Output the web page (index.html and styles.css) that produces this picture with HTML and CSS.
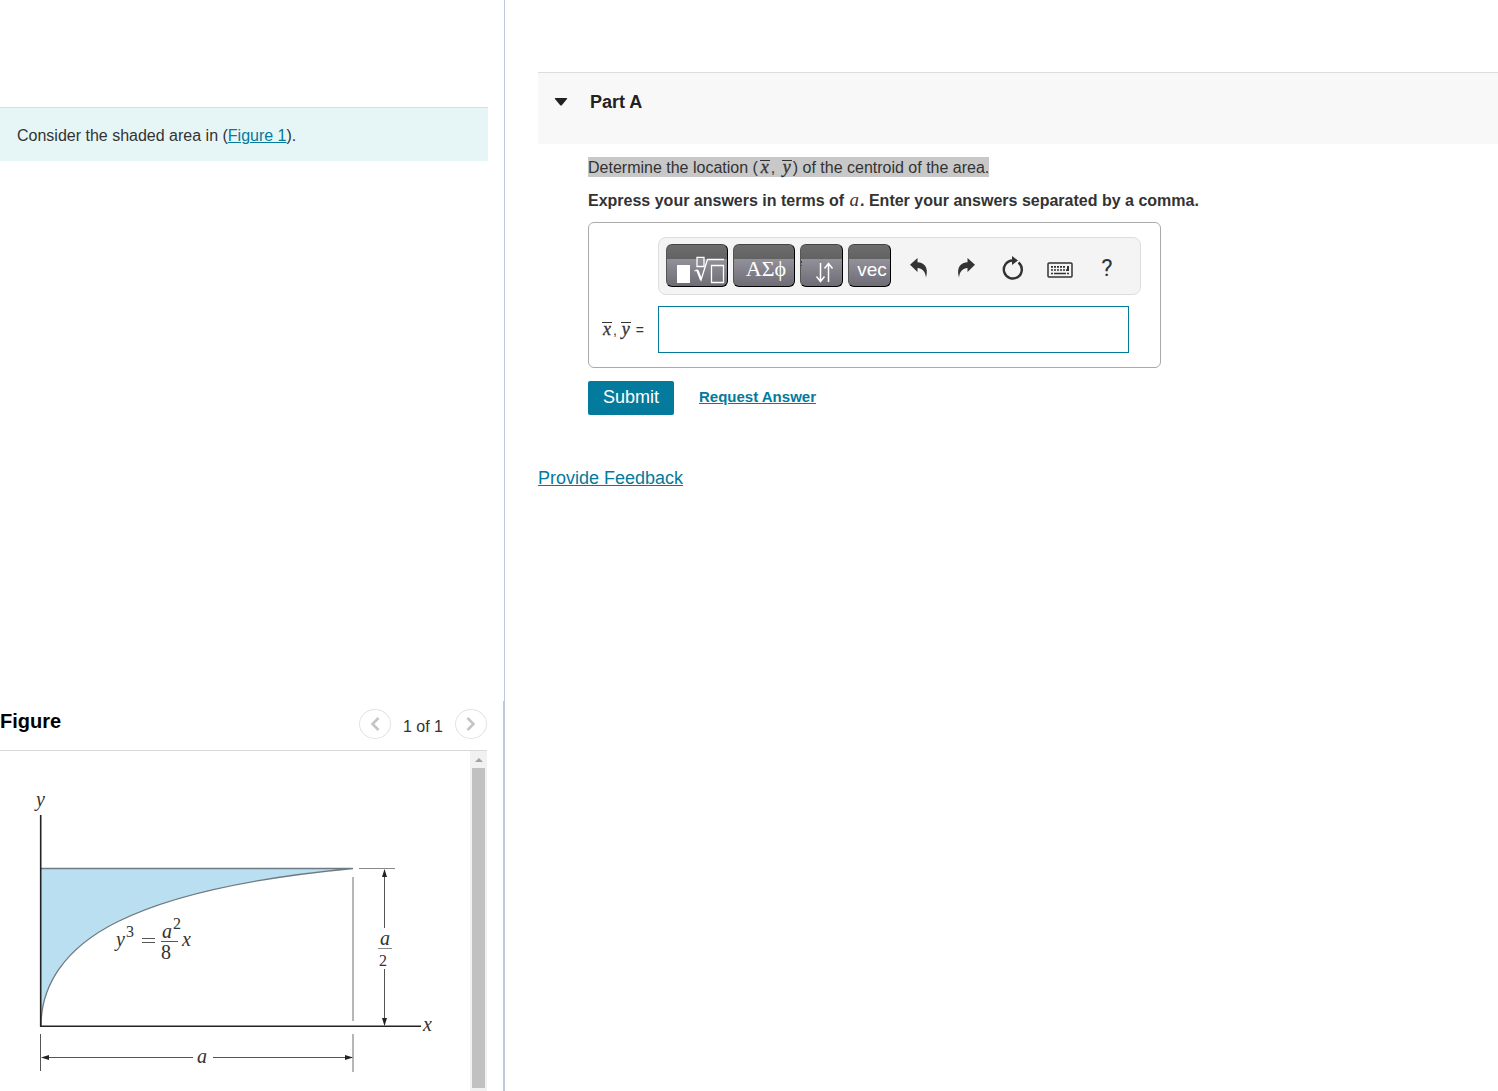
FILE: index.html
```html
<!DOCTYPE html>
<html lang="en">
<head>
<meta charset="utf-8">
<meta name="viewport" content="width=device-width, initial-scale=1">
<title>Part A</title>
<link rel="stylesheet" href="styles.css">
</head>
<body>
<div class="layout">
  <aside class="side">
    <div class="side-top">
      <p class="intro">Consider the shaded area in (<a href="#figure">Figure 1</a>).</p>
    </div>
    <section class="figure" id="figure">
      <header class="figure-head">
        <h2>Figure</h2>
        <nav class="pager" aria-label="Figures">
          <button type="button" class="round" aria-label="Previous figure"><svg width="10" height="14" viewBox="0 0 10 14"><path d="M8.500 1L2.500 7l6 6"/></svg></button>
          <span class="count">1 of 1</span>
          <button type="button" class="round" aria-label="Next figure"><svg width="10" height="14" viewBox="0 0 10 14"><path d="M1.500 1l6 6-6 6"/></svg></button>
        </nav>
      </header>
      <div class="figure-body">
        <svg class="plot" width="470" height="340" viewBox="0 0 470 340" role="img" aria-label="Shaded area above the curve">
          <path class="area" d="M41 275C41 234 65 197 117 171C175 142 262 126 353 117H41z"/>
          <path class="edge" d="M41 275C41 234 65 197 117 171C175 142 262 126 353 117.500H41"/>
          <path class="axis" d="M40.700 64V275.300H421"/>
          <path class="guide" d="M353 126V270M353 283V321M359 117.500H395M378 197.500H392"/>
          <path class="dim" d="M40.500 283V320M42 306.500H193M213 306.500H352M384.500 119V177M384.500 218V274"/>
          <path class="tip" d="M41 306.500l8-2.500v5zM353 306.500l-8-2.500v5zM384.500 118l-2.500 8h5zM384.500 275l-2.500-8h5z"/>
          <path class="dim" d="M142 187.500H155M142 191.500H155M161 190.500H178"/>
          <g class="label">
            <text x="36" y="55">y</text>
            <text x="423" y="280">x</text>
            <text x="197" y="312">a</text>
            <text x="380" y="194">a</text>
            <text class="num small" x="379" y="215">2</text>
            <text x="116" y="195">y</text>
            <text class="num small" x="126" y="186">3</text>
            <text x="162" y="187">a</text>
            <text class="num small" x="173" y="178">2</text>
            <text class="num" x="161" y="208">8</text>
            <text x="182" y="195">x</text>
          </g>
        </svg>
        <div class="scrollbar" aria-hidden="true"><span class="scroll-up"></span><span class="thumb"></span></div>
      </div>
    </section>
  </aside>

  <main class="main">
    <header class="part-head">
      <button type="button" class="toggle" aria-expanded="true"><svg width="14" height="8" viewBox="0 0 14 8"><path fill="#222" d="M1.500 0h11q1.200 0 .5 1L8 7Q7 8 6 7L1 1Q.300 0 1.500 0z"/></svg><span>Part A</span></button>
    </header>
    <form class="part-body">
      <p class="prompt"><span class="selected">Determine the location (<i class="math bar">x</i>, <i class="math bar">y</i>) of the centroid of the area.</span></p>
      <p class="hint">Express your answers in terms of <i class="math">a</i>. Enter your answers separated by a comma.</p>
      <div class="answer">
        <div class="toolbar" role="toolbar" aria-label="Equation editor">
          <button type="button" class="key wide" aria-label="Templates"><svg width="60" height="41" viewBox="0 0 60 41"><path fill="#fff" d="M11 20h13v18H11z"/><g fill="none" stroke="#fff"><path stroke-width="1.300" d="M31 12.500h7v9h-7zM45.500 20.500h12v17h-12z"/><path stroke-width="1.300" d="M28.500 26l2.500-1 4 10L41.500 14.500H58"/><path stroke-width="2.200" d="M31.500 25.500l3.500 9"/></g></svg></button>
          <button type="button" class="key wide greek">ΑΣϕ</button>
          <button type="button" class="key" aria-label="Arrows"><svg width="40" height="41" viewBox="0 0 40 41"><path fill="none" stroke="#fff" stroke-width="1.500" d="M20.500 18v18M16.500 31.500l4 5 4-5M28.500 37V19M24.500 23.500l4-5 4 5"/><path fill="#444" d="M1 16h1v2H1zM1 20h1v1H1z"/></svg></button>
          <button type="button" class="key vec">vec</button>
          <div class="tools">
            <button type="button" class="tool" aria-label="Undo"><svg width="20" height="22" viewBox="0 0 20 22"><path d="M1 7.700L8.500 1v4.200C15 5.500 20 10 17 20.500 16.300 14 13 11.200 8.500 11v4z"/></svg></button>
            <button type="button" class="tool" aria-label="Redo"><svg width="20" height="22" viewBox="0 0 20 22"><path d="M19 7.700L11.500 1v4.200C5 5.500 0 10 3 20.500 3.700 14 7 11.200 11.500 11v4z"/></svg></button>
            <button type="button" class="tool" aria-label="Reset"><svg width="22" height="24" viewBox="0 0 22 24"><path d="M10 0l6 4.500L10 9z"/><path fill="none" stroke="#333" stroke-width="2.400" d="M10.500 4.500A9 9 0 1 0 16.500 6.500"/></svg></button>
            <button type="button" class="tool keyboard" aria-label="Keyboard"><svg width="26" height="16" viewBox="0 0 26 16"><rect x="1" y="1" width="24" height="14" rx="1" fill="none" stroke="#333" stroke-width="1.500"/><path fill="none" stroke="#333" stroke-width="1.700" d="M4 4.800h15M4 8h15M4 11.500h2M20 11.500h2" stroke-dasharray="2 1"/><path d="M7 10.700h12v1.600H7zM19 7.200h1V4h2v5h-3z"/></svg></button>
            <button type="button" class="tool help" aria-label="Help">?</button>
          </div>
        </div>
        <label class="field-label" for="answer"><i class="math bar">x</i>, <i class="math bar">y</i> =</label>
        <input class="field" id="answer" type="text" autocomplete="off">
      </div>
      <div class="actions">
        <button type="submit" class="submit">Submit</button>
        <a class="request" href="#request">Request Answer</a>
      </div>
    </form>
    <a class="feedback" href="#feedback">Provide Feedback</a>
  </main>
</div>
</body>
</html>
```
FILE: styles.css
```css
* { box-sizing: border-box; }
body {
  margin: 0;
  background: #fff;
  color: #333;
  font: 16px/22px "Liberation Sans", Arial, sans-serif;
}
button, input { font: inherit; color: inherit; }
button { padding: 0; border: 0; background: none; cursor: pointer; }
svg { display: block; }
p, h2 { margin: 0; }
a { color: #047a9c; }

.layout { display: flex; min-height: 100vh; }
.side { flex: 0 0 505px; display: flex; flex-direction: column; }
.side-top { flex: 1; padding: 107px 16px 0 0; border-right: 1px solid #b9cbdc; }
.intro {
  padding: 17px 17px 14px;
  border-top: 1px solid #d4dfdf;
  background: #e6f6f6;
}

.figure { border-right: 2px solid #b9cbdc; padding-right: 16px; }
.figure-head {
  display: flex;
  align-items: flex-start;
  justify-content: space-between;
  height: 50px;
  padding-top: 8px;
  border-bottom: 1px solid #d9d9d9;
}
.figure-head h2 { font-size: 20px; line-height: 24px; color: #000; }
.pager { display: flex; gap: 12px; }
.count { padding-top: 7px; }
.round {
  display: grid;
  place-items: center;
  width: 32px;
  height: 30px;
  border: 1px solid #e3e3e3;
  border-radius: 50%;
}
.round path { fill: none; stroke: #c4c4c4; stroke-width: 2.500; }
.figure-body { display: flex; justify-content: space-between; }
.scrollbar {
  display: flex;
  flex-direction: column;
  align-items: center;
  width: 17px;
  padding-bottom: 3px;
  background: #f1f1f1;
}
.scroll-up {
  margin: 7px 0 6px;
  border: 4px solid transparent;
  border-top: 0;
  border-bottom-color: #a3a3a3;
}
.thumb { flex: 1; width: 13px; background: #c1c1c1; }

.area { fill: #badff1; }
.edge { fill: none; stroke: #6f7b82; stroke-width: 1.300; }
.axis { fill: none; stroke: #222; stroke-width: 1.600; }
.guide { stroke: #888; stroke-width: 1.200; }
.dim { stroke: #555; stroke-width: 1; }
.tip { fill: #222; }
.label { font: italic 20px "Liberation Serif", "Times New Roman", serif; fill: #333; }
.num { font-style: normal; }
.small { font-size: 16px; }

.main { flex: 1; min-width: 0; padding: 72px 0 0 33px; }
.part-head {
  height: 72px;
  padding: 18px 16px;
  border-top: 1px solid #ddd;
  background: #f8f8f8;
}
.toggle { display: flex; align-items: center; gap: 22px; font-size: 18px; font-weight: bold; color: #222; }
.part-body { padding: 13px 16px 0 50px; }
.selected { padding: 2px 0 1px; background: #c8c8c8; }
.math {
  padding: 0 1px;
  font-family: "Liberation Serif", "Times New Roman", serif;
  font-size: 19px;
  font-weight: normal;
  line-height: 16px;
}
.bar {
  display: inline-block;
  width: 10px;
  height: 12px;
  margin: 0 1px 0 2px;
  padding: 0;
  border-top: 1px solid #333;
  font-size: 18px;
  line-height: 12px;
  text-align: center;
  -webkit-text-stroke: 0.3px;
}
.hint { margin-top: 11px; font-weight: bold; }
.answer {
  display: grid;
  grid-template-columns: 56px minmax(0, 1fr);
  row-gap: 11px;
  max-width: 573px;
  margin-top: 10px;
  padding: 14px 31px 14px 13px;
  border: 1px solid #aaa;
  border-radius: 6px;
}
.toolbar {
  grid-column: 2;
  display: flex;
  gap: 5px;
  height: 58px;
  margin-right: -12px;
  padding: 6px 7px;
  border: 1px solid #ddd;
  border-radius: 8px;
  background: #f4f4f4;
}
.key {
  width: 43px;
  height: 43px;
  overflow: hidden;
  border: 1px solid #000;
  border-top-color: #444;
  border-left-color: #555;
  border-radius: 6px;
  background: linear-gradient(#6d6d6d, #626262 14px, #92919a 14px, #6e6d75);
  color: #fff;
}
.wide { width: 62px; }
.key svg { margin-left: -1px; }
.greek { padding: 7px 0 0 4px; font: 22px/24px "Liberation Serif", "Times New Roman", serif; }
.vec { padding: 9px 0 0 5px; font-size: 19px; }
.tools { display: flex; gap: 5px; padding-left: 2px; }
.tool { display: grid; place-items: center; width: 42px; height: 43px; padding-top: 4px; }
.tool svg { fill: #333; }
.keyboard { padding-top: 9px; }
.help { font-family: Roboto, "Liberation Sans", sans-serif; font-size: 24px; }
.field-label { align-self: center; font-size: 14px; white-space: nowrap; }
.field-label .bar { margin: 0 1px 0 0; }
.field {
  width: 100%;
  height: 47px;
  padding: 0 8px;
  border: 1px solid #047a9c;
  border-radius: 0;
  background: #fff;
}
.actions { display: flex; gap: 25px; margin-top: 13px; }
.submit {
  width: 86px;
  height: 34px;
  padding-bottom: 2px;
  border-radius: 2px;
  background: #047a9c;
  color: #fff;
  font-size: 18px;
}
.request { padding-top: 5px; font-size: 15px; font-weight: bold; }
.feedback { display: inline-block; margin-top: 52px; font-size: 18px; }
```
